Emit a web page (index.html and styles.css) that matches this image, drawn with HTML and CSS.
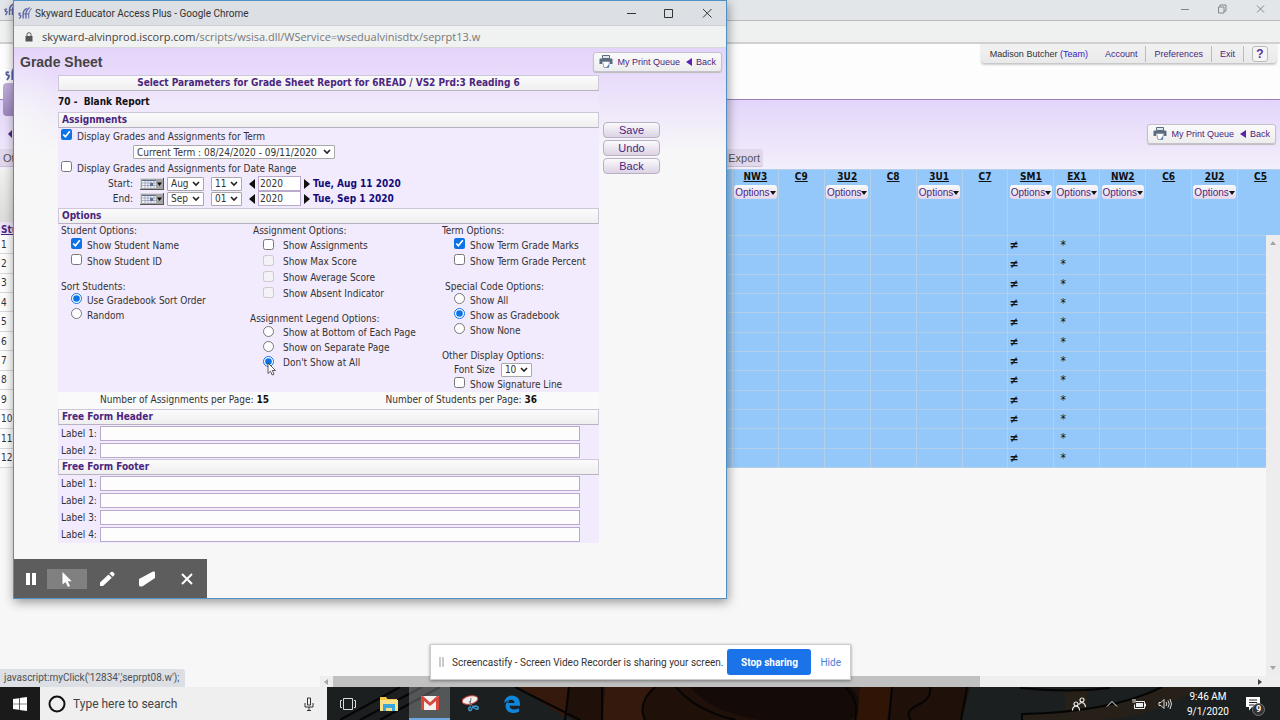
FILE: index.html
```
<!DOCTYPE html>
<html lang="en">

<head>
    <meta charset="UTF-8">
    <meta name="viewport" content="width=device-width, initial-scale=1.0">
    <title>Skyward Educator Access Plus</title>
    <link rel="stylesheet" href="styles.css">
</head>

<body>
    <!-- Shared icons -->
    <svg class="sprite" aria-hidden="true">
        <symbol id="printer" viewBox="0 0 14 13">
            <path d="M3.500 0.500h7v3h-7z" fill="#dfe6ee" stroke="#5b6b80" />
            <path d="M0.500 4.500q0-1 1-1h11q1 0 1 1v4.500h-2.500v-2h-8v2h-2.500z" fill="#5b6b80" />
            <path d="M3.500 6.500h7l-1 6h-4.500z" fill="#fff" stroke="#7f8da0" stroke-width="0.8" />
            <path d="M7 12.500l3-3v3z" fill="#4c7fb5" />
        </symbol>
        <symbol id="logo" viewBox="0 0 15 14">
            <g fill="none" stroke="#5a62a8" stroke-width="1.4">
                <path d="M3 7.500q-2-1-2 .5t1.500 1.500-1 3.500" />
                <path d="M5.500 13v-5q0-4 4-6" />
                <path d="M8.500 13v-5q0-4 4-7" />
                <path d="M11.500 13v-5q0-3 3-6M5 8h7" stroke-width="1" />
            </g>
        </symbol>
        <symbol id="calendar" viewBox="0 0 24 12">
            <path d="M0 0h24v12h-24z" fill="#a5a5a8" />
            <path d="M0 0.500h24M0.500 0v12" stroke="#d8d8da" />
            <path d="M0 11.500h24M23.500 0v12" stroke="#555" />
            <path d="M2 2h14v8h-14z" fill="#eef0f5" />
            <path d="M2 2.500h14" stroke="#5f6f96" />
            <path d="M2 5h14M2 7.500h14M5 3v7M8 3v7M11 3v7M14 3v7" stroke="#8d98b3" stroke-width="0.7" />
            <path d="M10 5h3v3h-3z" fill="#5f6f96" />
            <path d="M17 4.500h5l-2.500 3.500z" fill="#111" />
        </symbol>
    </svg>

    <div class="desktop">

        <!-- Gradebook window in the background -->
        <div class="browser">
            <div class="browser-title">
                <svg class="back-logo"><use href="#logo" /></svg>
                <svg class="win-buttons" viewBox="0 0 90 12" fill="none" stroke="#85888b">
                    <path d="M1 6.500h8M38.500 4h5.500v6h-5.500zM40 4v-2h6v6h-2M77 2.500l7 7M84 2.500l-7 7" />
                </svg>
            </div>
            <div class="browser-address"></div>

            <div class="page">
                <div class="page-top">
                    <svg class="page-logo"><use href="#logo" /></svg>
                    <nav class="account-bar">
                        <span class="user">Madison Butcher <a class="team" href="#">(Team)</a></span>
                        <a class="first" href="#">Account</a>
                        <a href="#">Preferences</a>
                        <a class="exit" href="#">Exit</a>
                        <button class="help" type="button">?</button>
                    </nav>
                </div>

                <div class="page-band">
                    <div class="side-tab"></div>
                    <div class="band-row">
                        <span class="side-arrow"></span>
                        <div class="queue">
                            <svg class="printer"><use href="#printer" /></svg>
                            <a href="#">My Print Queue</a>
                            <a class="back" href="#">Back</a>
                        </div>
                    </div>
                    <div class="tabs">
                        <button type="button">Other</button>
                        <button type="button">Export</button>
                    </div>
                </div>

                <div class="grades">
                    <table class="students">
                        <thead>
                            <tr><th><a href="#">Student</a></th></tr>
                        </thead>
                        <tbody id="student-rows"></tbody>
                    </table>
                    <div class="score-wrap">
                        <table class="scores">
                            <thead>
                                <tr id="score-head"></tr>
                            </thead>
                            <tbody id="score-rows"></tbody>
                        </table>
                    </div>
                    <div class="scroll-y"><span class="up"></span><span class="down"></span></div>
                </div>

                <div class="scroll-x"><span class="left"></span><span class="thumb"></span><span class="right"></span></div>
            </div>

            <div class="status">javascript:myClick('12834','seprpt08.w');</div>
        </div>

        <!-- Grade sheet popup -->
        <div class="popup">
            <div class="popup-title">
                <svg class="logo"><use href="#logo" /></svg>
                <span>Skyward Educator Access Plus - Google Chrome</span>
                <svg class="win-buttons" viewBox="0 0 90 12" fill="none" stroke="#333">
                    <path d="M1 6.500h9M38.500 2.500h8v8h-8zM77 2l8.500 8.500M85.500 2l-8.500 8.500" />
                </svg>
            </div>
            <div class="popup-address">
                <svg class="lock" viewBox="0 0 8 10"><path d="M0.500 4h7v5.500h-7z" fill="#555" /><path d="M2 4.500v-2q0-1.800 2-1.800t2 1.800v2" fill="none" stroke="#555" /></svg>
                <span>skyward-alvinprod.iscorp.com<i>/scripts/wsisa.dll/WService=wsedualvinisdtx/seprpt13.w</i></span>
            </div>

            <div class="popup-page">
                <div class="popup-head">
                    <h1>Grade Sheet</h1>
                    <div class="queue">
                        <svg class="printer"><use href="#printer" /></svg>
                        <a href="#">My Print Queue</a>
                        <a class="back" href="#">Back</a>
                    </div>
                </div>

                <form class="popup-body">
                    <div class="sheet">
                        <h2 class="bar centered">Select Parameters for Grade Sheet Report for 6READ / VS2 Prd:3 Reading 6</h2>
                        <p class="report">70 -&nbsp; Blank Report</p>

                        <h2 class="bar">Assignments</h2>
                        <div class="panel assignments">
                            <label class="line"><input type="checkbox" checked>Display Grades and Assignments for Term</label>
                            <div class="line term">
                                <select aria-label="Term"><option>Current Term : 08/24/2020 - 09/11/2020</option></select>
                            </div>
                            <label class="line"><input type="checkbox">Display Grades and Assignments for Date Range</label>
                            <div class="date">
                                <label for="start-month">Start:</label>
                                <svg class="calendar"><use href="#calendar" /></svg>
                                <select id="start-month"><option>Aug</option></select>
                                <select class="day" aria-label="Start day"><option>11</option></select>
                                <span class="arrow prev"></span>
                                <input type="text" value="2020" aria-label="Start year">
                                <span class="arrow next"></span>
                                <b>Tue, Aug 11 2020</b>
                            </div>
                            <div class="date">
                                <label for="end-month">End:</label>
                                <svg class="calendar"><use href="#calendar" /></svg>
                                <select id="end-month"><option>Sep</option></select>
                                <select class="day" aria-label="End day"><option>01</option></select>
                                <span class="arrow prev"></span>
                                <input type="text" value="2020" aria-label="End year">
                                <span class="arrow next"></span>
                                <b>Tue, Sep 1 2020</b>
                            </div>
                        </div>

                        <h2 class="bar">Options</h2>
                        <div class="panel options">
                            <div>
                                <h3>Student Options:</h3>
                                <label class="check"><input type="checkbox" checked>Show Student Name</label>
                                <label class="check"><input type="checkbox">Show Student ID</label>
                                <h3 class="next-group">Sort Students:</h3>
                                <label class="radio"><input type="radio" name="sort" checked>Use Gradebook Sort Order</label>
                                <label class="radio"><input type="radio" name="sort">Random</label>
                            </div>
                            <div class="wide">
                                <h3 class="indent">Assignment Options:</h3>
                                <label class="check"><input type="checkbox">Show Assignments</label>
                                <label class="check"><input type="checkbox" disabled>Show Max Score</label>
                                <label class="check"><input type="checkbox" disabled>Show Average Score</label>
                                <label class="check"><input type="checkbox" disabled>Show Absent Indicator</label>
                                <h3 class="next-group">Assignment Legend Options:</h3>
                                <label class="radio"><input type="radio" name="legend">Show at Bottom of Each Page</label>
                                <label class="radio"><input type="radio" name="legend">Show on Separate Page</label>
                                <label class="radio"><input type="radio" name="legend" checked>Don't Show at All
                                    <svg class="cursor" viewBox="0 0 9 14"><path d="M1 1v10.500l2.500-2.300 1.700 3.800 1.800-.8-1.700-3.700h3.200z" fill="#fff" stroke="#333" stroke-width="0.8" /></svg>
                                </label>
                            </div>
                            <div class="last">
                                <h3>Term Options:</h3>
                                <label class="check"><input type="checkbox" checked>Show Term Grade Marks</label>
                                <label class="check"><input type="checkbox">Show Term Grade Percent</label>
                                <h3 class="next-group indent">Special Code Options:</h3>
                                <label class="radio"><input type="radio" name="code">Show All</label>
                                <label class="radio"><input type="radio" name="code" checked>Show as Gradebook</label>
                                <label class="radio"><input type="radio" name="code">Show None</label>
                                <h3 class="next-group">Other Display Options:</h3>
                                <div class="size"><label for="font-size">Font Size</label><select id="font-size"><option>10</option></select></div>
                                <label class="radio"><input type="checkbox">Show Signature Line</label>
                            </div>
                        </div>

                        <div class="totals">
                            <span>Number of Assignments per Page: <b>15</b></span>
                            <span>Number of Students per Page: <b>36</b></span>
                        </div>

                        <h2 class="bar">Free Form Header</h2>
                        <div class="panel fields">
                            <label for="h1">Label 1:</label><input type="text" id="h1">
                            <label for="h2">Label 2:</label><input type="text" id="h2">
                        </div>
                        <h2 class="bar">Free Form Footer</h2>
                        <div class="panel fields">
                            <label for="f1">Label 1:</label><input type="text" id="f1">
                            <label for="f2">Label 2:</label><input type="text" id="f2">
                            <label for="f3">Label 3:</label><input type="text" id="f3">
                            <label for="f4">Label 4:</label><input type="text" id="f4">
                        </div>
                    </div>

                    <div class="actions">
                        <button type="button">Save</button>
                        <button type="button">Undo</button>
                        <button type="button">Back</button>
                    </div>
                </form>
            </div>

            <!-- Recording tools -->
            <div class="recorder">
                <button type="button" aria-label="Pause"><svg viewBox="0 0 20 20"><path d="M5 4h4v12h-4zM11 4h4v12h-4z" fill="#fff" /></svg></button>
                <button type="button" class="active" aria-label="Mouse"><svg viewBox="0 0 20 20"><path d="M5.500 3v12.500l3-2.600 2.500 5 2-1-2.300-4.700h4z" fill="#fff" /></svg></button>
                <button type="button" aria-label="Pen"><svg viewBox="0 0 20 20"><path d="M3 17v-3.500l8.500-8 3.300 3.300-8.800 8.200zM12.500 4.600l1.500-1.500q1-.8 2 0l1.200 1.200q.9 1 0 2l-1.500 1.500z" fill="#fff" /></svg></button>
                <button type="button" aria-label="Eraser"><svg viewBox="0 0 20 20"><path d="M2 10l14-7.500q2-.5 2 1v5.500l-12 8q-3.500 1.500-4-1z" fill="#fff" /></svg></button>
                <button type="button" aria-label="Close"><svg viewBox="0 0 20 20"><path d="M5 5l10 10M15 5l-10 10" stroke="#fff" stroke-width="2" /></svg></button>
            </div>
        </div>

        <!-- Screen sharing notice -->
        <div class="sharing">
            <span class="grip"></span>
            <span class="message">Screencastify - Screen Video Recorder is sharing your screen.</span>
            <button class="stop" type="button">Stop sharing</button>
            <a href="#">Hide</a>
        </div>
    </div>

    <!-- Windows taskbar -->
    <div class="taskbar">
        <svg class="wallpaper" viewBox="0 0 1280 33" preserveAspectRatio="none">
            <path d="M0 0h1280v33h-1280z" fill="#1b1f20" />
            <path d="M515 0h455l-8 33h-388z" fill="#1f100a" />
            <path d="M518 0h50l-3 30zM605 0h50q-15 16-10 33h-42z" fill="#34190c" />
            <path d="M690 0q20 25 70 33h90q20-14 0-33z" fill="#140b08" />
            <path d="M860 0h32l-5 33h-30z" fill="#301507" />
            <path d="M1022 33v-6q90-2 140-27h40q-50 30-100 33zM1065 3h22v24h-22z" fill="#272018" />
            <path d="M515 0l65 33M569 0l-4 33M602 0v33M655 0q-18 16-10 33M676 0q20 24 60 33M845 0q15 14 10 33M892 0l-3 33M930 0q2 12-12 18t-7 15M967 0l-6 33M1020 1q50 5 90 0M1022 33v-6q90-2 140-27M340 33l60-33M360 33l62-33M380 33l60-33" fill="none" stroke="#050505" stroke-width="2" />
        </svg>
        <button class="start" type="button" aria-label="Start"><svg viewBox="0 0 14 14"><path d="M0 2l6-.8v5.500h-6zM6.700 1.100l7.300-1.100v6.700h-7.300zM0 7.300h6v5.500l-6-.8zM6.700 7.300h7.300v6.700l-7.300-1.100z" fill="#fff" /></svg></button>
        <div class="search">
            <svg class="ring" viewBox="0 0 18 18"><circle cx="9" cy="9" r="7.500" fill="none" stroke="#111" stroke-width="2" /></svg>
            <input type="text" placeholder="Type here to search" aria-label="Search">
            <svg class="mic" viewBox="0 0 10 14"><path d="M3.500 1h3v7h-3zM1 6v4h8v-4M5 10v3M3 13.500h4" fill="none" stroke="#333" /></svg>
        </div>
        <button class="app" type="button" aria-label="Task view"><svg viewBox="0 0 18 18"><path d="M4.500 3.500h9v11h-9zM3 5.500h-1.500v7h1.500M15 5.500h1.500v7h-1.500" fill="none" stroke="#ddd" /></svg></button>
        <button class="app" type="button" aria-label="File Explorer"><svg viewBox="0 0 18 18"><path d="M0 2h6l1.500 2h9.500v12h-17z" fill="#f3c84b" /><path d="M0 5h18v11h-18z" fill="#fbe08a" /><path d="M3 9h12v7h-3v-3h-6v3h-3z" fill="#3aa7dc" /></svg></button>
        <button class="app active" type="button" aria-label="Gmail"><svg viewBox="0 0 18 18"><path d="M0 2h18v14h-18z" fill="#f3f0ee" /><path d="M0 3q0-1 1-1h1l7 6.500 7-6.500h1q1 0 1 1v13h-3v-9l-6 5-6-5v9h-3z" fill="#d9463b" /></svg></button>
        <button class="app" type="button" aria-label="Snipping Tool"><svg viewBox="0 0 18 18"><ellipse cx="8" cy="5" rx="8" ry="4" transform="rotate(-12 8 5)" fill="#f2eeee" stroke="#c44" /><path d="M9 3l-1 8M7 6l5 7" stroke="#777" /><path d="M9 12q-3 0-2 3 2 2 3-2 1-2 4-2 3 1 2 3-2 1-5-2" fill="none" stroke="#3a9ad0" stroke-width="1.500" /></svg></button>
        <button class="app" type="button" aria-label="Edge"><svg viewBox="0 0 18 18"><path d="M1 8q1-7 8-7.500 7.500.5 8 8v2.300h-10.500q.5 3.500 4.500 3.700 2.800 0 5-1.300v3.300q-2.500 1.500-6 1.500-7-.5-7.500-7 .3-4 4-6-1.300 1.300-1.500 3h6.500q0-3-3.200-3.200-4 0-7.300 3.200z" fill="#0f86dc" /></svg></button>
        <div class="tray">
            <svg class="people" viewBox="0 0 16 16"><g fill="none" stroke="#eee" stroke-width="1.200"><circle cx="5" cy="8" r="2" /><circle cx="11" cy="4" r="2" /><path d="M1.500 14.500q0-4 3.500-4.500 3.500.5 3.500 4.500M8 8.500q1-2 3-2 3 .5 3.500 4.500" /></g></svg>
            <svg class="chevron" viewBox="0 0 12 12"><path d="M1 8.500l5-5 5 5" fill="none" stroke="#eee" /></svg>
            <svg class="battery" viewBox="0 0 14 12"><path d="M4 5h7v4h-7z" fill="#eee" /><path d="M3.500 3.500h9v7h-10v-4M13.500 5.500v3M1 1v2M3 1v2M0.500 4h3" fill="none" stroke="#eee" /></svg>
            <svg class="sound" viewBox="0 0 14 12"><path d="M1 4.500h2l3-3v9l-3-3h-2zM8 4q1.500 2 0 4M10 2.500q2.500 3.500 0 7M12 1q3 5 0 10" fill="none" stroke="#ddd" /></svg>
            <div class="clock"><span>9:46 AM</span><span>9/1/2020</span></div>
            <div class="notice">
                <svg viewBox="0 0 14 14"><path d="M0 0h14v10h-8l-3 3.500v-3.500h-3z" fill="#fff" /><path d="M3 3h8M3 5.500h8M3 8h5" stroke="#222" /></svg>
                <span>9</span>
            </div>
        </div>
    </div>

    <script>
        // Score columns, left to right: name and whether it has an Options menu
        const columns = [
            ['', false], ['NW3', true], ['C9', false], ['3U2', true], ['C8', false],
            ['3U1', true], ['C7', false], ['SM1', true], ['EX1', true],
            ['NW2', true], ['C6', false], ['2U2', true], ['C5', false]
        ];
        const marks = { SM1: '≠', EX1: '*' };
        const studentCount = 12;

        let head = '';
        for (const [name, menu] of columns) {
            head += '<th>' + (name ? '<a href="#">' + name + '</a>' : '');
            head += (menu ? '<button type="button">Options<i></i></button>' : '') + '</th>';
        }
        document.getElementById('score-head').innerHTML = head;

        let students = '';
        let scores = '';
        for (let i = 1; i <= studentCount; i++) {
            students += '<tr><td>' + i + '</td></tr>';
            scores += '<tr>';
            for (const [name] of columns) {
                scores += '<td class="' + name.toLowerCase() + '">' + (marks[name] || '') + '</td>';
            }
            scores += '</tr>';
        }
        document.getElementById('student-rows').innerHTML = students;
        document.getElementById('score-rows').innerHTML = scores;
    </script>
</body>

</html>
```
FILE: styles.css
```
* {
    box-sizing: border-box;
}

body {
    margin: 0;
    height: 100vh;
    display: flex;
    flex-direction: column;
    overflow: hidden;
    font-family: "DejaVu Sans Condensed", "DejaVu Sans", sans-serif;
    font-size: 10px;
    color: #333;
}

button,
input,
select {
    font: inherit;
    margin: 0;
}

button {
    padding: 0;
    border: 0;
}

a {
    color: #4b2580;
    text-decoration: none;
}

svg {
    display: block;
    flex: none;
}

.sprite {
    position: absolute;
    width: 0;
    height: 0;
}

.desktop {
    position: relative;
    flex: 1;
    min-height: 0;
    display: flex;
}

/* Background browser window */
.browser {
    flex: 1;
    min-width: 0;
    display: flex;
    flex-direction: column;
    background: #f7f7f8;
}

.browser-title {
    display: flex;
    align-items: center;
    justify-content: space-between;
    height: 21px;
    padding: 0 10px 2px 4px;
    background: #e3e6e9;
    border-bottom: 1px solid #b9bcbf;
}

.back-logo {
    width: 15px;
    height: 14px;
}

.win-buttons {
    width: 90px;
    height: 12px;
}

.browser-address {
    height: 23px;
    background: #eff0f0;
    border-bottom: 2px solid #cfd0d1;
}

.page {
    position: relative;
    flex: 1;
    min-height: 0;
    display: flex;
    flex-direction: column;
}

.page-top {
    display: flex;
    align-items: flex-start;
    justify-content: space-between;
    height: 56px;
    padding: 0 3px 0 5px;
    background: #fdfdfd;
    border-bottom: 1px solid #9a7fb8;
}

.page-logo {
    width: 20px;
    height: 20px;
    margin-top: 18px;
}

.account-bar {
    display: flex;
    align-items: center;
    height: 20px;
    padding: 0 9px;
    font: 9px "Liberation Sans", sans-serif;
    background: linear-gradient(#f2f2f2, #e9e9e9);
    border-bottom: 1px solid #c9c9c9;
    border-radius: 0 0 4px 4px;
    box-shadow: 0 1px 2px #ccc;
}

.account-bar a {
    padding: 3px 8px;
    border-left: 1px solid #bbb;
}

.account-bar a.first {
    border: 0;
}

.account-bar a.team {
    padding: 0 9px 0 0;
    border: 0;
    color: #3620c8;
}

.account-bar a.exit {
    border-right: 1px solid #bbb;
}

.help {
    width: 16px;
    height: 16px;
    margin-left: 8px;
    font-weight: bold;
    font-size: 12px;
    line-height: 14px;
    color: #5b2b9a;
    background: #f5f5f5;
    border: 1px solid #bbb;
    border-radius: 3px;
}

.page-band {
    height: 69px;
    background: linear-gradient(#e3d5fa, #f3effb);
    display: flex;
    flex-direction: column;
    position: relative;
}

.side-tab {
    position: absolute;
    left: 3px;
    top: -17px;
    width: 60px;
    height: 33px;
    background: linear-gradient(#c2aedb, #9c86bd);
    border-radius: 4px;
}

.band-row {
    display: flex;
    align-items: center;
    justify-content: space-between;
    height: 49px;
    padding: 18px 4px 0 8px;
}

.side-arrow {
    border: 4px solid transparent;
    border-right-color: #4b2580;
    border-left: 0;
}

.queue {
    display: flex;
    align-items: center;
    height: 20px;
    padding: 0 5px;
    font: 9px "Liberation Sans", sans-serif;
    background: linear-gradient(#fafafa, #ededed);
    border: 1px solid #c5c1cc;
    border-radius: 3px;
    box-shadow: 0 1px 1px #bbb;
}

.printer {
    width: 14px;
    height: 13px;
    margin-right: 4px;
}

.queue .back {
    display: flex;
    align-items: center;
}

.queue .back::before {
    content: "";
    margin: 0 4px 0 6px;
    border: 4px solid transparent;
    border-right: 6px solid #5b22b0;
    border-left: 0;
}

.tabs {
    display: flex;
    justify-content: space-between;
    padding-right: 517px;
}

.tabs button {
    height: 18px;
    padding: 0 3px;
    font: 11px "Liberation Sans", sans-serif;
    color: #555;
    background: #e2d8ec;
    border-bottom: 1px solid #c9bfd3;
    border-radius: 0 3px 3px 0;
}

.grades {
    position: relative;
    flex: 1;
    min-height: 0;
    display: flex;
    align-items: flex-start;
}

.grades table {
    border-collapse: collapse;
    table-layout: fixed;
    height: 299px;
}

.grades thead tr {
    height: 66px;
}

.students {
    flex: 1;
}

.students th {
    padding: 0 1px;
    text-align: left;
    vertical-align: bottom;
    background: linear-gradient(#f0f0ee, #dcdcda 80%, #ece4f6 81%);
}

.students th a {
    text-decoration: underline;
}

.students td {
    padding: 0 1px;
    background: #fcfcfc;
    border-bottom: 1px solid #d8d8da;
}

.score-wrap {
    width: 594px;
    overflow: hidden;
}

.scores {
    width: 598px;
    background: #95c8fa;
}

.scores th,
.scores td {
    padding: 0;
    border: 1px solid #b3cfea;
    line-height: 12px;
}

.scores th {
    vertical-align: top;
    text-align: center;
}

.scores th a {
    display: block;
    margin-top: 1px;
    color: #111;
    text-decoration: underline;
}

.scores button {
    height: 14px;
    margin-top: 2px;
    padding: 0 1px;
    font: 10px "Liberation Sans", sans-serif;
    white-space: nowrap;
    color: #4b2580;
    background: linear-gradient(#fafafa, #e3d6ea);
    border-radius: 3px;
}

.scores button i {
    display: inline-block;
    margin-bottom: 1px;
    border: 3px solid transparent;
    border-top: 4px solid #111;
    border-bottom: 0;
}

.scores td {
    color: #111;
    font-size: 12px;
}

.scores .sm1 {
    padding-left: 1px;
    font-weight: bold;
}

.scores .ex1 {
    padding-left: 6px;
}

.scroll-y {
    position: absolute;
    right: 0;
    top: 66px;
    bottom: 0;
    width: 14px;
    display: flex;
    flex-direction: column;
    align-items: center;
    justify-content: space-between;
    padding: 6px 0;
    background: #ededee;
}

.up,
.down {
    border: 3px solid transparent;
    border-bottom: 4px solid #a5a5a5;
    border-top: 0;
}

.down {
    border-top: 4px solid #a5a5a5;
    border-bottom: 0;
}

.scroll-x {
    display: flex;
    align-items: center;
    height: 11px;
    margin-left: 320px;
    padding: 0 18px 0 4px;
    background: #eeeeef;
}

.scroll-x .thumb {
    width: 69%;
    height: 11px;
    margin: 0 auto 0 5px;
    background: #c1c1c2;
}

.scroll-x .left,
.scroll-x .right {
    border: 3px solid transparent;
    border-right: 4px solid #a5a5a5;
    border-left: 0;
}

.scroll-x .right {
    border-left: 4px solid #444;
    border-right: 0;
}

.status {
    position: absolute;
    left: 0;
    bottom: 0;
    height: 18px;
    padding: 0 6px 0 4px;
    font: 10px/18px Roboto, sans-serif;
    color: #4d5156;
    background: #dcdfe3;
    border-radius: 0 3px 0 0;
}

/* Popup window */
.popup {
    position: absolute;
    left: 13px;
    top: 0;
    width: 714px;
    min-height: 599px;
    background: #f7f7f8;
    border: 1px solid #4f91c4;
    box-shadow: 1px 3px 10px rgba(0, 0, 0, 0.4);
}

.popup-title {
    display: flex;
    align-items: center;
    height: 25px;
    padding: 0 10px 0 4px;
    font: 10px Roboto, sans-serif;
    color: #333;
    background: #dcdfe3;
    border-bottom: 1px solid #ccd0d3;
}

.popup-title .logo {
    width: 14px;
    height: 14px;
    margin-right: 3px;
}

.popup-title .win-buttons {
    margin-left: auto;
}

.popup-address {
    display: flex;
    align-items: center;
    height: 22px;
    padding: 0 11px;
    font: 11px "Open Sans", sans-serif;
    color: #444;
    background: #f0f2f2;
    border-bottom: 1px solid #d9d9dc;
}

.popup-address i {
    font-style: normal;
    color: #777;
}

.lock {
    width: 8px;
    height: 10px;
    margin-right: 9px;
}

.popup-page {
    background: radial-gradient(60px 75px at 0 80px, #f7f7f8, rgba(247, 247, 248, 0)), linear-gradient(#e5d4fa, #e9dcfb 30px, #f7f7f8 105px);
}

.popup-head {
    display: flex;
    justify-content: space-between;
    align-items: center;
    height: 27px;
    padding: 0 4px 0 6px;
}

h1,
h2,
h3,
p {
    margin: 0;
}

h1 {
    font: bold 14px "Liberation Sans", sans-serif;
    color: #444;
}

.popup-body {
    display: flex;
    align-items: flex-start;
    gap: 4px;
    padding-left: 44px;
}

.sheet {
    width: 541px;
    background: rgba(242, 234, 253, 0.4);
}

.bar {
    height: 16px;
    padding: 0 3px;
    font-size: 10px;
    line-height: 14px;
    color: #4b2580;
    background: linear-gradient(#fbfbfb, #efeff0);
    border: 1px solid #cfc6da;
    border-bottom-color: #b9b0c4;
}

.centered {
    text-align: center;
}

.report {
    height: 21px;
    font-weight: bold;
    line-height: 21px;
    color: #111;
}

.panel {
    background: #f2eafd;
}

.assignments {
    padding-bottom: 2px;
}

.line {
    display: flex;
    align-items: center;
    height: 16px;
    padding-left: 3px;
}

input[type="checkbox"],
input[type="radio"] {
    width: 11px;
    height: 11px;
    margin: 0 5px 4px 0;
    accent-color: #0b72e7;
}

select {
    height: 14px;
    padding: 0 3px;
    color: #333;
    appearance: none;
    background: #fff url("data:image/svg+xml,%3Csvg xmlns='http://www.w3.org/2000/svg' width='8' height='6'%3E%3Cpath d='M1 1l3 3 3-3' fill='none' stroke='%23222' stroke-width='1.6'/%3E%3C/svg%3E") right 3px center no-repeat;
    border: 1px solid #a9a9a9;
    border-radius: 1px;
}

.term {
    padding-left: 75px;
}

.term select {
    width: 202px;
}

.date {
    display: flex;
    align-items: center;
    height: 15px;
}

.date label {
    width: 75px;
    margin-right: 7px;
    text-align: right;
}

.calendar {
    width: 24px;
    height: 12px;
    margin-right: 3px;
}

.date select {
    width: 37px;
    margin-right: 7px;
}

.date .day {
    width: 31px;
}

.arrow {
    border: 5px solid transparent;
    border-right: 6px solid #111;
    border-left: 0;
}

.arrow.next {
    border-left: 6px solid #111;
    border-right: 0;
}

.date input {
    width: 43px;
    height: 15px;
    margin: 0 3px;
    padding: 0 1px;
    color: #333;
    border: 1px solid #b9aacd;
}

.date b {
    margin-left: 3px;
    color: #120a78;
}

.options {
    display: grid;
    grid-template-columns: 189px 192px 1fr;
    padding: 0 0 0 3px;
}

h3 {
    height: 13px;
    font-size: 10px;
    font-weight: normal;
    line-height: 13px;
}

.next-group {
    margin-top: 11px;
}

.indent {
    padding-left: 3px;
}

.check,
.radio {
    position: relative;
    display: flex;
    align-items: center;
    height: 16px;
    padding-left: 10px;
}

.radio {
    height: 15px;
}

.wide label {
    padding-left: 13px;
}

.options .wide input {
    margin: 0 9px 2px 0;
}

.last label {
    padding-left: 12px;
}

.cursor {
    position: absolute;
    left: 17px;
    top: 7px;
    width: 9px;
    height: 14px;
}

.size {
    display: flex;
    align-items: center;
    height: 15px;
}

.size select {
    width: 31px;
    margin-left: 6px;
}

.totals {
    display: flex;
    justify-content: space-between;
    height: 17px;
    padding: 0 62px 0 42px;
    line-height: 16px;
    background: #fafafa;
}

.totals b {
    color: #111;
}

.fields {
    display: grid;
    grid-template-columns: 38px 1fr;
    grid-auto-rows: 17px;
    align-items: center;
    column-gap: 1px;
    padding: 0 19px 0 3px;
}

.fields input {
    width: 100%;
    height: 15px;
    background: #fdfdfd;
    border: 1px solid #b9aacd;
}

.actions {
    display: flex;
    flex-direction: column;
    gap: 2px;
    width: 57px;
    margin-top: 47px;
}

.actions button {
    height: 16px;
    font: 11px "Liberation Sans", sans-serif;
    color: #4b2580;
    background: linear-gradient(#fbfafc, #dcd3e4);
    border: 1px solid #b9b0c4;
    border-radius: 4px;
}

.recorder {
    position: absolute;
    left: 0;
    bottom: 0;
    display: flex;
    align-items: center;
    width: 193px;
    height: 39px;
    background: #5d5d5d;
}

.recorder button {
    flex: 1;
    height: 20px;
    display: flex;
    justify-content: center;
    background: none;
}

.recorder button:first-child {
    flex: none;
    width: 33px;
}

.recorder .active {
    background: #808080;
}

.recorder svg {
    width: 20px;
    height: 20px;
}

/* Sharing notice */
.sharing {
    position: absolute;
    left: 430px;
    bottom: 7px;
    display: flex;
    align-items: center;
    width: 421px;
    height: 36px;
    padding: 0 9px 0 8px;
    font: 10px Roboto, sans-serif;
    white-space: nowrap;
    background: #fff;
    border: 1px solid #ccc;
    box-shadow: 0 1px 3px rgba(0, 0, 0, 0.4);
}

.grip {
    width: 5px;
    height: 10px;
    margin-right: 8px;
    border: solid #ccc;
    border-width: 0 2px;
}

.stop {
    width: 84px;
    height: 26px;
    margin: 0 9px 0 auto;
    color: #fff;
    font-weight: bold;
    background: #1a73e8;
    border-radius: 3px;
}

.sharing a {
    color: #4a80d8;
}

/* Taskbar */
.taskbar {
    position: relative;
    display: flex;
    height: 33px;
    font-family: Roboto, sans-serif;
    background: #1b1f20;
}

.wallpaper {
    position: absolute;
    width: 100%;
    height: 33px;
}

.start {
    position: relative;
    width: 40px;
    background: #1a1a1a;
}

.start svg {
    width: 14px;
    height: 14px;
    margin: auto;
}

.search {
    position: relative;
    display: flex;
    align-items: center;
    width: 287px;
    padding: 0 13px 0 8px;
    background: #efefef;
}

.ring {
    width: 18px;
    height: 18px;
}

.search input {
    flex: 1;
    min-width: 0;
    padding: 0 7px;
    font-size: 12px;
    background: none;
    border: 0;
}

.search input::placeholder {
    color: #444;
}

.mic {
    width: 10px;
    height: 14px;
}

.app {
    position: relative;
    width: 41px;
    background: none;
}

.app svg {
    width: 18px;
    height: 18px;
    margin: auto;
}

.app.active {
    background: rgba(255, 255, 255, 0.25);
    border-bottom: 2px solid #6fa8e0;
}

.tray {
    position: relative;
    display: flex;
    align-items: center;
    margin-left: auto;
    padding-right: 20px;
    color: #fff;
}

.people {
    width: 16px;
    height: 16px;
    margin-right: 19px;
}

.chevron {
    width: 12px;
    height: 12px;
    margin-right: 14px;
}

.battery,
.sound {
    width: 14px;
    height: 12px;
    margin-right: 12px;
}

.clock {
    display: flex;
    flex-direction: column;
    align-items: center;
    width: 48px;
    font-size: 10px;
    line-height: 15px;
}

.notice {
    position: relative;
    margin-left: 14px;
}

.notice svg {
    width: 14px;
    height: 14px;
}

.notice span {
    position: absolute;
    left: 6px;
    top: 6px;
    width: 13px;
    height: 13px;
    font-size: 9px;
    font-weight: bold;
    line-height: 11px;
    text-align: center;
    background: #333;
    border: 1px solid #777;
    border-radius: 50%;
}
```
